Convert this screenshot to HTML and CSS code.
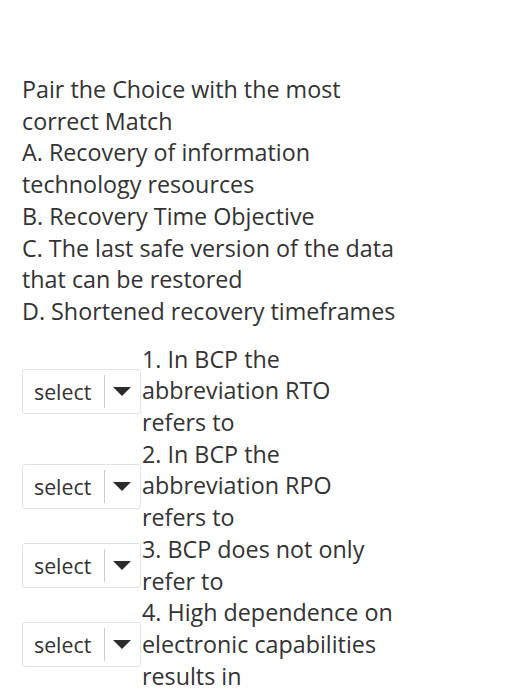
FILE: index.html
```html
<!DOCTYPE html>
<html>
<head>
<meta charset="utf-8">
<link rel="stylesheet" href="styles.css">
</head>
<body>
<div class="page">
  <p class="question">Pair the Choice with the most correct Match<br>A. Recovery of information technology resources<br>B. Recovery Time Objective<br>C. The last safe version of the data that can be restored<br>D. Shortened recovery timeframes</p>
  <div class="rows">
    <div class="row">
      <div class="select"><span class="label">select</span><span class="sep"></span><span class="arrow"></span></div>
      <div class="prompt">1. In BCP the abbreviation RTO refers to</div>
    </div>
    <div class="row">
      <div class="select"><span class="label">select</span><span class="sep"></span><span class="arrow"></span></div>
      <div class="prompt">2. In BCP the abbreviation RPO refers to</div>
    </div>
    <div class="row">
      <div class="select"><span class="label">select</span><span class="sep"></span><span class="arrow"></span></div>
      <div class="prompt">3. BCP does not only refer to</div>
    </div>
    <div class="row">
      <div class="select"><span class="label">select</span><span class="sep"></span><span class="arrow"></span></div>
      <div class="prompt">4. High dependence on electronic capabilities results in</div>
    </div>
  </div>
</div>
</body>
</html>
```

FILE: styles.css
```css
html, body {
  margin: 0;
  padding: 0;
  background: #fff;
}
.page {
  padding: 74px 0 0 22px;
  font-family: "Open Sans", sans-serif;
  font-size: 23.3px;
  line-height: 31.7px;
  color: #333;
}
.question {
  margin: 0 0 16px 0;
  width: 400px;
}
.row {
  display: flex;
  align-items: center;
}
.select {
  box-sizing: border-box;
  width: 119px;
  height: 45px;
  flex: none;
  border: 1px solid #e3e3e3;
  border-radius: 3px;
  display: flex;
  align-items: center;
  padding-left: 11px;
  font-size: 21.3px;
  line-height: 1;
}
.label {
  width: 60px;
}
.sep {
  width: 1px;
  height: 33px;
  background: #ccc;
  margin-left: 10px;
}
.arrow {
  margin-left: 8px;
  width: 0;
  height: 0;
  border-left: 9px solid transparent;
  border-right: 9px solid transparent;
  border-top: 9px solid #2b2b2b;
}
.prompt {
  width: 254px;
  padding-left: 1px;
}
```
